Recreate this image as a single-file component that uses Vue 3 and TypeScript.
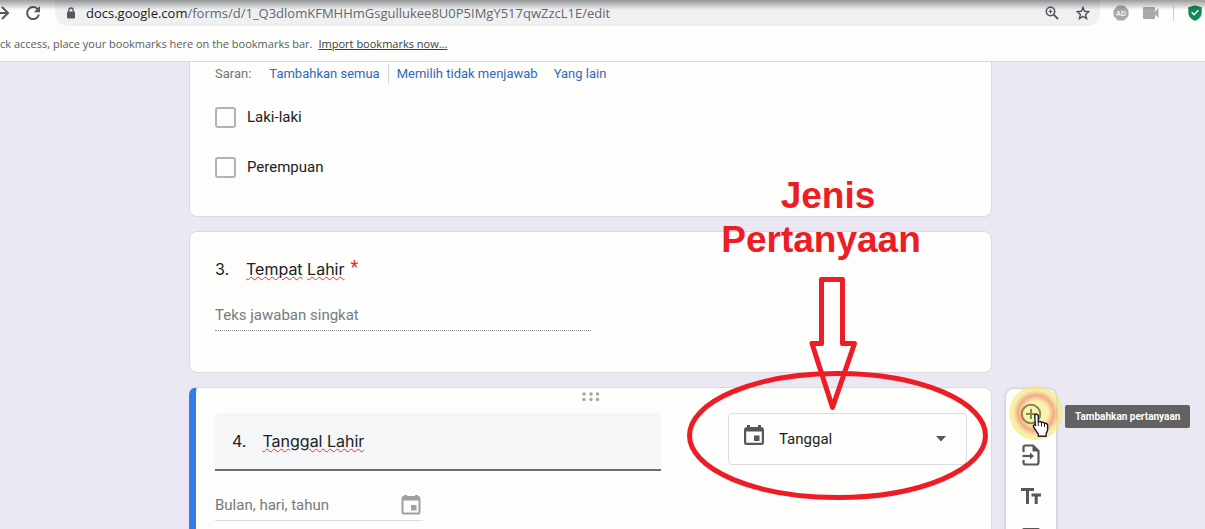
<script setup lang="ts">
import { ref } from 'vue'

const url = { host: 'docs.google.com', path: '/forms/d/1_Q3dlomKFMHHmGsgullukee8U0P5IMgY517qwZzcL1E/edit' }
const suggestions = ['Tambahkan semua', 'Memilih tidak menjawab', 'Yang lain']
const options = ['Laki-laki', 'Perempuan']
const types = ['Tanggal', 'Waktu', 'Jawaban singkat', 'Paragraf']
const questionType = ref('Tanggal')
const title = ref('Tanggal Lahir')
const picked = ref<string[]>([])
const dateValue = ref('')
</script>

<template>
  <div class="page">
    <header class="browser">
      <div class="nav">
        <button class="bare" aria-label="Forward">
          <svg width="10" height="16" viewBox="0 0 10 16"><path d="M0 8H8M2 2l6 6-6 6" fill="none" stroke="#55585c" stroke-width="2" /></svg>
        </button>
        <button class="bare reload" aria-label="Reload">
          <svg width="16" height="16" viewBox="0 0 16 16">
            <path d="M13 4.6A6 6 0 1 0 13.9 9.6" fill="none" stroke="#55585c" stroke-width="2" />
            <path d="M15 1v6.2H8.8z" fill="#55585c" />
          </svg>
        </button>
        <div class="omnibox">
          <svg class="lock" width="10" height="12" viewBox="0 0 10 12">
            <rect x="1" y="4.5" width="8" height="7" rx="1" fill="#55585c" />
            <path d="M2.8 5V3.2a2.2 2.2 0 0 1 4.4 0V5" fill="none" stroke="#55585c" stroke-width="1.3" />
          </svg>
          <span class="url"><b>{{ url.host }}</b>{{ url.path }}</span>
          <button class="bare" aria-label="Zoom">
            <svg width="14" height="14" viewBox="0 0 14 14" fill="none" stroke="#505357" stroke-width="1.5">
              <circle cx="5.5" cy="5.5" r="4.2" /><path d="M8.7 8.7L13 13" stroke-width="1.8" /><path d="M3.6 5.5h3.8M5.5 3.6v3.8" stroke-width="1.1" />
            </svg>
          </button>
          <button class="bare" aria-label="Bookmark this page">
            <svg width="14" height="14" viewBox="0 0 14 14"><path d="M7 1.4l1.6 3.9 4.2.4-3.2 2.8 1 4.1L7 10.4l-3.6 2.2 1-4.1L1.200 5.700l4.200-.4z" fill="none" stroke="#505357" stroke-width="1.4" /></svg>
          </button>
        </div>
        <div class="extensions">
          <svg width="16" height="16" viewBox="0 0 16 16">
            <path d="M5 .5h6L15.500 5v6L11 15.500H5L.5 11V5z" fill="#a9a9a9" />
            <text x="8" y="10.600" text-anchor="middle" class="ad">AD</text>
          </svg>
          <svg width="16" height="12" viewBox="0 0 16 12"><rect y="0" width="12" height="12" rx="1" fill="#a9a9a9" /><path d="M12 4.500L15.500 1v10L12 7.500z" fill="#a9a9a9" /></svg>
          <i class="rule"></i>
          <svg width="14" height="16" viewBox="0 0 14 16"><path d="M7 0.300l6.700 2v5.200c0 4-2.800 6.900-6.700 8.200C3.100 14.400.3 11.500.3 7.500V2.300z" fill="#0f8a54" /><path d="M3.700 7.300l2.400 2.400 4.300-4.400" fill="none" stroke="#fff" stroke-width="1.500" /></svg>
        </div>
      </div>
      <div class="bookmarks">
        <span>ck access, place your bookmarks here on the bookmarks bar.</span>
        <a href="#">Import bookmarks now...</a>
      </div>
    </header>

    <main class="canvas">
      <section class="card choices">
        <div class="suggest">
          <span>Saran:</span>
          <button v-for="s in suggestions" :key="s" class="bare">{{ s }}</button>
        </div>
        <label v-for="o in options" :key="o" class="option">
          <input v-model="picked" type="checkbox" :value="o" />
          <span>{{ o }}</span>
        </label>
      </section>

      <section class="card short">
        <h2 class="heading">
          <span class="num">3.</span>
          <span><u>Tempat</u> <u>Lahir</u></span>
          <span class="star">*</span>
        </h2>
        <input class="answer" type="text" placeholder="Teks jawaban singkat" aria-label="Teks jawaban singkat" />
      </section>

      <section class="card active">
        <svg class="grip" width="18" height="10" viewBox="0 0 18 10" fill="#a6a6a6">
          <circle cx="2" cy="2" r="1.700" /><circle cx="9" cy="2" r="1.700" /><circle cx="15.500" cy="2" r="1.700" />
          <circle cx="2" cy="7.500" r="1.700" /><circle cx="9" cy="7.500" r="1.700" /><circle cx="15.500" cy="7.500" r="1.700" />
        </svg>
        <div class="editor">
          <label class="title">
            <span>4.</span>
            <input v-model="title" type="text" aria-label="Pertanyaan" />
          </label>
          <div class="type">
            <svg class="event" width="20" height="22" viewBox="0 0 20 22">
              <path d="M3 1h3v2h8V1h3v2c1.700 0 3 1 3 3v12.500a2.500 2.500 0 0 1-2.500 2.500h-15A2.500 2.500 0 0 1 0 18.500V6c0-2 1.300-3 3-3zM2.200 7.500v11.300h15.600V7.500z" fill="#55575b" fill-rule="evenodd" />
              <rect x="10" y="11.500" width="5.500" height="5.500" fill="#55575b" />
            </svg>
            <select v-model="questionType" aria-label="Jenis pertanyaan">
              <option v-for="t in types" :key="t">{{ t }}</option>
            </select>
            <svg class="caret" width="10" height="6" viewBox="0 0 10 6"><path d="M0 0h10L5 5.500z" fill="#55575b" /></svg>

            <p class="note"><span>Jenis</span><br />Pertanyaan</p>
            <svg class="marks" width="302" height="226" viewBox="0 0 302 226" fill="none" stroke="#ee1c24" stroke-width="5">
              <ellipse cx="150.500" cy="160.500" rx="148" ry="62" />
              <path d="M134.500 4.500h21v64H167.500L145.500 132.500 125 68.500h9.500z" stroke-linejoin="round" />
            </svg>
          </div>
        </div>
        <label class="date">
          <input v-model="dateValue" type="text" placeholder="Bulan, hari, tahun" aria-label="Bulan, hari, tahun" />
          <svg width="20" height="22" viewBox="0 0 20 22">
            <path d="M3 1h3v1h8V1h3v1c1.700 0 2.500 1 2.500 3v13.500a2 2 0 0 1-2 2h-15a2 2 0 0 1-2-2V5C.5 3 1.300 2 3 2zM2.500 6.500v12h15v-12z" fill="#a0a0a0" fill-rule="evenodd" />
            <rect x="10" y="11" width="5.500" height="5.500" fill="#a0a0a0" />
          </svg>
        </label>
      </section>

      <aside class="tools">
        <button class="bare" aria-label="Tambahkan pertanyaan">
          <svg width="24" height="24" viewBox="0 0 24 24" fill="none" stroke="#55575b" stroke-width="2"><circle cx="12" cy="12" r="9.300" /><path d="M12 7v10M7 12h10" /></svg>
        </button>
        <button class="bare" aria-label="Impor pertanyaan">
          <svg width="24" height="24" viewBox="0 0 24 24" fill="none" stroke="#55575b" stroke-width="2.200">
            <path d="M4.500 9V4.500a2 2 0 0 1 2-2H14l5.500 5.500v11.500a2 2 0 0 1-2 2h-11a2 2 0 0 1-2-2V17" /><path d="M14 2v6h6z" fill="#55575b" stroke-width="1" /><path d="M3.500 13h9" /><path d="M11 9.500l4 3.500-4 3.500z" fill="#55575b" stroke="none" />
          </svg>
        </button>
        <button class="bare" aria-label="Tambahkan judul dan deskripsi">
          <svg width="24" height="24" viewBox="0 0 24 24" fill="none" stroke="#55575b" stroke-width="3"><path d="M2 5.500h13M8.500 5v15" /><path d="M12.500 11h9.500M17.200 10v10" /></svg>
        </button>
        <button class="bare" aria-label="Tambahkan gambar">
          <svg width="24" height="24" viewBox="0 0 24 24" fill="none" stroke="#55575b" stroke-width="2"><rect x="4" y="4" width="16" height="16" rx="1" /><path d="M7 17l3-4 2 2.500 3-4 3 5.500z" fill="#55575b" stroke="none" /></svg>
        </button>
        <i class="glow"></i>
        <svg class="hand" width="18" height="25" viewBox="0 0 18 25">
          <path d="M4.500 1.200c1.200 0 1.800.8 1.800 1.900v6c.5-1 2.900-.9 3.200.5.900-.7 2.600-.3 2.900.9 1-.5 3-.1 3.200 1.600v4.700c0 1.500-.9 2.300-1.400 3.700v2.700H6.300v-2.200C4.800 19.300 3.300 16.300 1.500 13.900c-.8-1.500.9-2.600 2-1.500l-.8-9.300c0-1.100.7-1.900 1.800-1.900z" fill="#fff" stroke="#1c1c2c" stroke-width="1.400" stroke-linejoin="round" />
          <path d="M6.300 9v4M9.500 10v3.500M12.500 11v3" stroke="#1c1c2c" fill="none" />
        </svg>
        <span class="tip" role="tooltip">Tambahkan pertanyaan</span>
      </aside>
    </main>
  </div>
</template>

<style>
body {
  margin: 0;
  background: #ebe8f4;
}
</style>

<style scoped>
* {
  box-sizing: border-box;
}
.page {
  height: 100vh;
  overflow: hidden;
  display: flex;
  flex-direction: column;
  background: #ebe8f4;
  font-family: Roboto, "Liberation Sans", sans-serif;
  color: #202124;
}
svg {
  display: block;
  flex: none;
}
.bare {
  border: 0;
  padding: 0;
  margin: 0;
  background: none;
  font: inherit;
  color: inherit;
}
input,
select {
  font: inherit;
  color: inherit;
  border: 0;
  margin: 0;
  padding: 0;
  background: none;
  outline: 0;
  border-radius: 0;
  min-width: 0;
}

.browser {
  flex: none;
  position: relative;
  background: #fdfdfb;
  border-bottom: 1px solid #d9d8e0;
  font-family: "Open Sans", "Noto Sans", sans-serif;
}
.browser::after {
  content: "";
  position: absolute;
  inset: 0 0 auto;
  height: 10px;
  background: linear-gradient(rgba(0, 0, 0, 0.38), rgba(0, 0, 0, 0));
  pointer-events: none;
}
.nav {
  height: 26px;
  display: flex;
  align-items: center;
}
.reload {
  margin: 0 14px 0 15px;
}
.omnibox {
  flex: 1;
  min-width: 0;
  height: 26px;
  display: flex;
  align-items: center;
  gap: 17px;
  padding: 0 10px 0 11px;
  border-radius: 0 0 13px 13px;
  background: #eff0f2;
}
.url {
  flex: 1;
  margin-left: -7px;
  font-size: 13px;
  line-height: 20px;
  white-space: nowrap;
  overflow: hidden;
  color: #63666a;
}
.url b {
  font-weight: 400;
  color: #202124;
}
.extensions {
  display: flex;
  align-items: center;
  gap: 14px;
  padding: 0 3px 0 13px;
}
.ad {
  font: bold 7px "Liberation Sans", sans-serif;
  fill: #f4f4f4;
}
.rule {
  width: 1px;
  height: 15px;
  background: #cfcfcf;
}
.bookmarks {
  height: 35px;
  display: flex;
  align-items: center;
  gap: 6px;
  font-size: 11px;
  white-space: nowrap;
  color: #5a5c60;
}
.bookmarks a {
  color: #3c4043;
}

.canvas {
  flex: none;
  display: grid;
  grid-template-columns: minmax(0, 1fr) 50px;
  column-gap: 14px;
  row-gap: 14px;
  padding: 0 149px 0 189px;
}
.card {
  grid-column: 1;
  background: #fdfdfb;
  border: 1px solid #dbd9e0;
  border-radius: 8px;
  padding: 0 24px 0 25px;
}
.choices {
  border-top: 0;
  border-radius: 0 0 8px 8px;
  padding-bottom: 24px;
}
.suggest {
  display: flex;
  align-items: center;
  height: 24px;
  margin-bottom: 6px;
  font-size: 13px;
  line-height: 20px;
  color: #70757a;
}
.suggest .bare {
  color: #3269b8;
  padding: 0 8px;
  white-space: nowrap;
}
.suggest .bare:nth-of-type(1) {
  margin-left: 10px;
  border-right: 1px solid #d5d6da;
}
.option {
  display: flex;
  align-items: center;
  gap: 11px;
  height: 50px;
  font-size: 15px;
}
.option input {
  appearance: none;
  width: 21px;
  height: 21px;
  border: 2px solid #b3b3b3;
  border-radius: 3px;
}
.short {
  padding-top: 25px;
  padding-bottom: 41px;
}
.heading {
  display: flex;
  margin: 0;
  font: 400 16px/24px Inter, Roboto, sans-serif;
}
.num {
  width: 31px;
}
.heading u {
  text-decoration: underline wavy #d93a30 1px;
  text-underline-offset: 1px;
}
.star {
  margin-left: 6px;
  font: 400 18px/20px Roboto, sans-serif;
  color: #d93025;
}
.answer {
  display: block;
  width: 50%;
  height: 32px;
  margin-top: 18px;
  border-bottom: 1px dotted #8c8c8c;
  font-size: 15px;
}
input::placeholder {
  color: #777b80;
  opacity: 1;
}
.active {
  position: relative;
  height: 220px;
  border-left: 7px solid #357ce8;
  padding-left: 19px;
}
.grip {
  margin: 4px auto 11px;
}
.editor {
  display: flex;
  align-items: flex-start;
  gap: 67px;
}
.title {
  flex: 1;
  min-width: 0;
  height: 58px;
  display: flex;
  align-items: center;
  gap: 16px;
  padding: 0 17px;
  background: #f4f6f8;
  border-bottom: 2px solid #6b6e72;
  border-radius: 4px 4px 0 0;
  font: 400 16px/24px Inter, Roboto, sans-serif;
}
.title input {
  flex: 1;
  text-decoration: underline wavy #d93a30 1px;
  text-underline-offset: 1px;
}
.type {
  position: relative;
  width: 239px;
  height: 52px;
  display: flex;
  align-items: center;
  gap: 15px;
  padding: 0 20px 0 15px;
  border: 1px solid #dadce0;
  border-radius: 4px;
  font-size: 15px;
}
.event {
  margin-bottom: 8px;
}
.type select {
  flex: 1;
  appearance: none;
}
.note {
  position: absolute;
  left: -18px;
  top: -240px;
  width: 220px;
  height: 88px;
  margin: 0;
  text-align: center;
  font: bold 37px/44px "Liberation Sans", Arial, sans-serif;
  color: #ee1c24;
  pointer-events: none;
}
.note span {
  padding-left: 14px;
}
.marks {
  position: absolute;
  left: -42px;
  top: -139px;
  pointer-events: none;
}
.date {
  display: flex;
  align-items: center;
  width: 208px;
  height: 32px;
  margin-top: 18px;
  padding-right: 2px;
  border-bottom: 1px solid #dcdcdc;
  font-size: 15px;
}
.date input {
  flex: 1;
}
.tools {
  grid-column: 2;
  grid-row: 3;
  position: relative;
  margin-top: 2px;
  padding-top: 4px;
  background: #fdfdfb;
  border-radius: 8px;
  box-shadow: 0 0 3px rgba(60, 64, 67, 0.35);
}
.tools .bare {
  display: grid;
  place-items: center;
  width: 100%;
  height: 41px;
}
.glow {
  position: absolute;
  left: 3px;
  top: -3px;
  width: 54px;
  height: 54px;
  border-radius: 50%;
  background: radial-gradient(circle, rgba(240, 222, 40, 0.35) 12px, rgba(240, 120, 70, 0.65) 18px, rgba(240, 150, 80, 0.6) 19px, rgba(242, 232, 110, 0.6) 23px);
}
.hand {
  position: absolute;
  left: 26px;
  top: 24px;
}
.tip {
  position: absolute;
  left: 59px;
  top: 16px;
  padding: 0 10px;
  border-radius: 2px;
  background: #626262;
  color: #fff;
  font-size: 10px;
  font-weight: 700;
  line-height: 23px;
  white-space: nowrap;
}
</style>
